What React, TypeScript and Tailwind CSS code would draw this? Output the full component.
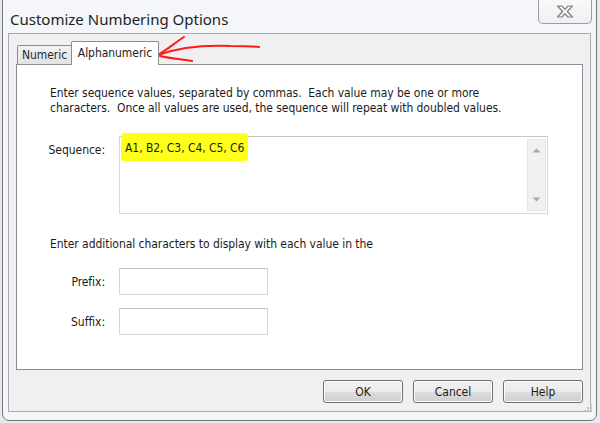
import React from "react";

const font = "font-['DejaVu_Sans_Condensed','DejaVu_Sans',sans-serif]";

const CloseGlyph = () => (
  <svg width="18" height="13" viewBox="0 0 18 13">
    <path
      d="M1.5 1 H6 L9 4.3 L12 1 H16.5 L11.3 6.5 L16.5 12 H12 L9 8.7 L6 12 H1.5 L6.7 6.5 Z"
      fill="#f7f7f7"
      stroke="#7d7f84"
      strokeWidth="1.2"
      strokeLinejoin="round"
    />
  </svg>
);

const DialogButton = ({ label }: { label: string }) => (
  <button className="w-[80px] h-[23px] rounded-[3px] border border-[#707070] bg-[linear-gradient(to_bottom,#f2f2f2_0%,#ebebeb_50%,#dddddd_51%,#cfcfcf_100%)] shadow-[inset_0_0_0_1px_#fcfcfc] text-[12px] text-[#1b1b1b]">
    {label}
  </button>
);

const Field = ({ label }: { label: string }) => (
  <div className="flex items-center">
    <span className="w-[88px] text-right">{label}</span>
    <div className="ml-[14px] w-[149px] h-[27px] border border-[#d2d5da] border-t-[#c0c3c8] bg-white" />
  </div>
);

export default function App() {
  return (
    <div className={`relative w-[600px] h-[423px] overflow-hidden bg-[#e9eaec] text-[12px] tracking-[-0.05px] text-[#1b1b1b] ${font}`}>
      <div className="ml-[2px] mt-[-8px] w-[595px] h-[429px] rounded-[7px] border border-[#74777b] bg-[#f4f6f9] flex flex-col">
        {/* title bar */}
        <div className="h-[40px] flex justify-between">
          <span className="pl-[7px] pt-[16px] text-[15px] leading-[20px] tracking-normal text-[#1e1e1e] font-['Noto_Sans',sans-serif]">
            Customize Numbering Options
          </span>
          <div className="mr-[4px] w-[54px] h-[31px] rounded-b-[5px] border border-t-0 border-[#9a9ca0] bg-[linear-gradient(to_bottom,#fbfbfb,#eef0f2)] flex items-end justify-center pb-[5px]">
            <CloseGlyph />
          </div>
        </div>

        {/* client area */}
        <div className="mx-[5px] h-[379px] border border-[#a8abb0] bg-[#f0f0f0] flex flex-col px-[7px] pt-[8px]">
          <div className="flex items-end h-[22px] pl-[1px]">
            <div className="h-[19px] w-[55px] border border-b-0 border-[#898c95] rounded-t-[2px] bg-[linear-gradient(to_bottom,#f3f3f3,#e2e2e2)] text-[#2a2a2a] flex items-center justify-center">
              Numeric
            </div>
            <div className="relative z-10 mb-[-1px] ml-[-1px] h-[24px] w-[88px] border border-b-0 border-[#898c95] rounded-t-[2px] bg-white flex items-center justify-center pb-[1px]">
              Alphanumeric
            </div>
          </div>

          <div className="h-[306px] border border-[#898c95] bg-white flex flex-col pt-[21px]">
            <p className="pl-[33px] leading-[15px] whitespace-pre">
              {"Enter sequence values, separated by commas.  Each value may be one or more\ncharacters.  Once all values are used, the sequence will repeat with doubled values."}
            </p>

            <div className="mt-[20px] flex items-start">
              <span className="w-[88px] text-right mt-[5px]">Sequence:</span>
              <div className="ml-[14px] w-[429px] h-[78px] border border-[#d6d9de] border-t-[#c3c6cb] bg-white flex">
                <div className="flex-1 pl-[1px]">
                  <span className="inline-block bg-[#ffff1a] rounded-[3px] px-[4px] pt-[7px] pb-[5px] mt-[-4px] leading-[16px] text-[#1b1b1b]">
                    A1, B2, C3, C4, C5, C6
                  </span>
                </div>
                <div className="w-[19px] my-[2px] mr-[1px] bg-[#f1f1f1] border border-[#e6e6e6] flex flex-col justify-between items-center py-[8px]">
                  <svg width="9" height="5" viewBox="0 0 9 5">
                    <path d="M0.5 4.5 L4.5 0.5 L8.5 4.5 Z" fill="#a9a9a9" />
                  </svg>
                  <svg width="9" height="5" viewBox="0 0 9 5">
                    <path d="M0.5 0.5 L4.5 4.5 L8.5 0.5 Z" fill="#a9a9a9" />
                  </svg>
                </div>
              </div>
            </div>

            <p className="mt-[23px] pl-[33px] leading-[15px]">
              Enter additional characters to display with each value in the
            </p>

            <div className="mt-[16px] flex flex-col gap-[13px]">
              <Field label="Prefix:" />
              <Field label="Suffix:" />
            </div>
          </div>

          <div className="mt-[10px] flex justify-end gap-[10px]">
            <DialogButton label="OK" />
            <DialogButton label="Cancel" />
            <DialogButton label="Help" />
          </div>
        </div>
      </div>

      {/* resize grip */}
      <svg className="absolute left-[584px] top-[404px]" width="8" height="8" viewBox="0 0 8 8">
        {[
          [6, 0],
          [3, 3],
          [6, 3],
          [0, 6],
          [3, 6],
          [6, 6],
        ].map(([x, y], i) => (
          <rect key={i} x={x} y={y} width="2" height="2" fill="#b9bcc0" />
        ))}
      </svg>

      {/* red annotation arrow */}
      <svg className="absolute left-0 top-0 pointer-events-none" width="600" height="423">
        <g fill="none" stroke="#ff1a1a" strokeWidth="2" strokeLinecap="round" strokeLinejoin="round">
          <path d="M158 55 C168 49 176 42 184 37" />
          <path d="M158 55 C180 47 205 45 230 46 C242 46 252 46 259 47" />
          <path d="M160 56 C168 58 178 59 192 61" />
        </g>
      </svg>
    </div>
  );
}
